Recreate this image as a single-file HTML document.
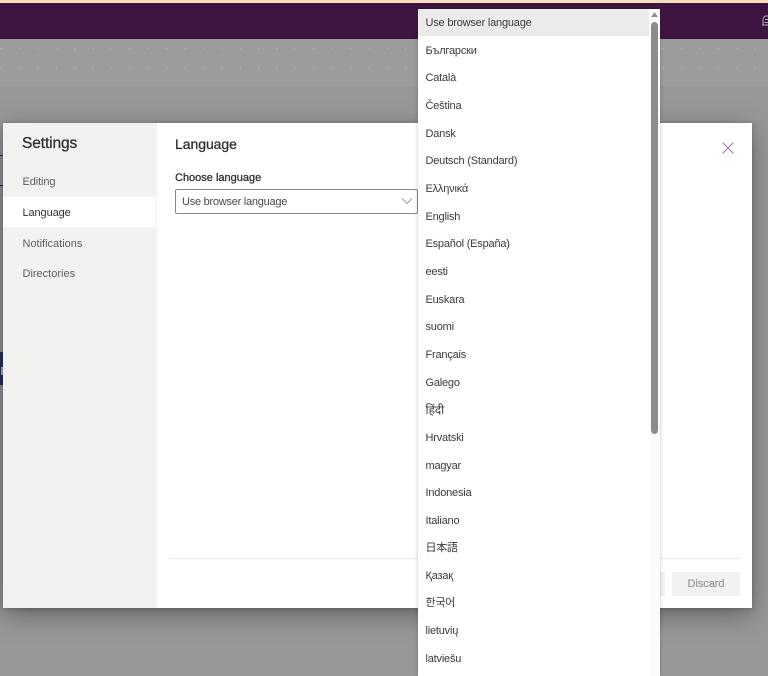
<!DOCTYPE html>
<html><head><meta charset="utf-8">
<style>
html,body{margin:0;padding:0;width:768px;height:676px;overflow:hidden;background:#979797;font-family:"Liberation Sans","Noto Sans CJK JP",sans-serif;color:#323130}
#w{left:0;top:0;width:768px;height:676px;overflow:hidden;filter:blur(.3px)}
div{position:absolute;box-sizing:border-box;white-space:nowrap}
.t{line-height:16px}
.i{left:425.5px;font-size:11px;line-height:16px;color:#3b3a39;letter-spacing:-.2px}
.s{-webkit-text-stroke:.3px currentColor}
</style></head><body><div id="w">
<div style="left:0;top:0;width:768px;height:3px;background:#f6dfbd"></div>
<div style="left:0;top:3px;width:768px;height:36px;background:#3e1541"></div>
<div style="left:0;top:39px;width:768px;height:47px;background:#9c9c9c;background-image:radial-gradient(circle,#adadad 0.7px,transparent 1px);background-size:18.4px 19px;background-position:-8px 0"></div>
<div style="left:0;top:86px;width:768px;height:590px;background:#989898"></div>
<svg style="position:absolute;left:761px;top:14px" width="7" height="13" viewBox="0 0 7 13"><path d="M1 11h6M2 10.500V6c0-2.500 1.500-4 3-4h2M3.500 8.500H7M4 5.500h3" fill="none" stroke="#b9a9bb" stroke-width="1"/></svg>
<div style="left:0;top:155px;width:3px;height:1px;background:#2b2a6b"></div>
<div style="left:0;top:185px;width:3px;height:1px;background:#2b2a6b"></div>
<div style="left:0;top:352px;width:3px;height:33px;background:#28306e"></div>
<div style="left:1px;top:367px;width:2px;height:8px;background:#b9b9c4"></div>

<div style="left:3px;top:123px;width:749px;height:485px;background:#fff;box-shadow:0 7px 26px rgba(0,0,0,.34),0 1px 5px rgba(0,0,0,.2)"></div>
<div style="left:3px;top:123px;width:154px;height:485px;background:#f3f2f1"></div>
<div style="left:3px;top:197px;width:153px;height:30px;background:#fff"></div>
<div class="t s" style="left:22px;top:136px;font-size:15.5px;letter-spacing:-.1px;color:#323130">Settings</div>
<div class="t" style="left:22.500px;top:174px;font-size:11px;letter-spacing:-.1px;color:#605e5c">Editing</div>
<div class="t" style="left:22.500px;top:205px;font-size:11px;letter-spacing:-.1px;color:#323130">Language</div>
<div class="t" style="left:22.500px;top:236px;font-size:11px;color:#605e5c">Notifications</div>
<div class="t" style="left:22.500px;top:266px;font-size:11px;color:#605e5c">Directories</div>

<div class="t s" style="left:175px;top:135.500px;font-size:14px;letter-spacing:-.05px;color:#323130">Language</div>
<div class="t s" style="left:175px;top:170px;font-size:11px;color:#323130">Choose language</div>
<div style="left:175px;top:189px;width:243px;height:25px;border:1px solid #8a8886;border-radius:2px;background:#fff"></div>
<div class="t" style="left:182px;top:194px;font-size:11px;letter-spacing:-.25px;color:#4a4948">Use browser language</div>
<svg style="position:absolute;left:401px;top:196px" width="12" height="10" viewBox="0 0 12 10"><path d="M1 2.500l5 5 5-5" fill="none" stroke="#a19f9d" stroke-width="1"/></svg>
<svg style="position:absolute;left:720px;top:140px" width="16" height="16" viewBox="0 0 16 16"><path d="M2.500 2.500l11 11M13.500 2.500l-11 11" fill="none" stroke="#a77ba8" stroke-width="1.100"/></svg>

<div style="left:169px;top:558px;width:571px;height:1px;background:#edebe9"></div>
<div style="left:600px;top:572px;width:65px;height:24px;background:#f3f2f1"></div>
<div style="left:672px;top:572px;width:68px;height:24px;background:#f3f2f1"></div>
<div class="t s" style="left:672px;top:576px;width:68px;text-align:center;font-size:11px;letter-spacing:-.05px;color:#a19f9d">Discard</div>

<div style="left:418px;top:9px;width:242px;height:667px;background:#fff;box-shadow:0 0 4px rgba(0,0,0,.22)"></div>
<div style="left:418px;top:9px;width:231px;height:27px;background:#edebe9"></div>
<div style="left:649px;top:9px;width:11px;height:667px;background:#fcfcfc"></div>
<svg style="position:absolute;left:650px;top:11px" width="9" height="8" viewBox="0 0 9 8"><path d="M4.500 1L8 6H1z" fill="#8f8f8f"/></svg>
<div style="left:651px;top:22px;width:7px;height:412px;background:#8c8c8c;border-radius:4px"></div>

<div class="i" style="top:15px">Use browser language</div>
<div class="i" style="top:42.500px">Български</div>
<div class="i" style="top:70px">Català</div>
<div class="i" style="top:97.500px">Čeština</div>
<div class="i" style="top:125.500px">Dansk</div>
<div class="i" style="top:153px">Deutsch (Standard)</div>
<div class="i" style="top:180.500px">Ελληνικά</div>
<div class="i" style="top:208.500px">English</div>
<div class="i" style="top:236px">Español (España)</div>
<div class="i" style="top:263.500px">eesti</div>
<div class="i" style="top:291.500px">Euskara</div>
<div class="i" style="top:319px">suomi</div>
<div class="i" style="top:346.500px">Français</div>
<div class="i" style="top:374.500px">Galego</div>
<div class="i" style="top:402px;font-size:12px">हिंदी</div>
<div class="i" style="top:429.500px">Hrvatski</div>
<div class="i" style="top:457.500px">magyar</div>
<div class="i" style="top:485px">Indonesia</div>
<div class="i" style="top:512.500px">Italiano</div>
<div class="i" style="top:540px;letter-spacing:-.3px">日本語</div>
<div class="i" style="top:567.500px">Қазақ</div>
<div class="i" style="top:595px;letter-spacing:-.3px">한국어</div>
<div class="i" style="top:623px">lietuvių</div>
<div class="i" style="top:650.500px">latviešu</div>
</div></body></html>
